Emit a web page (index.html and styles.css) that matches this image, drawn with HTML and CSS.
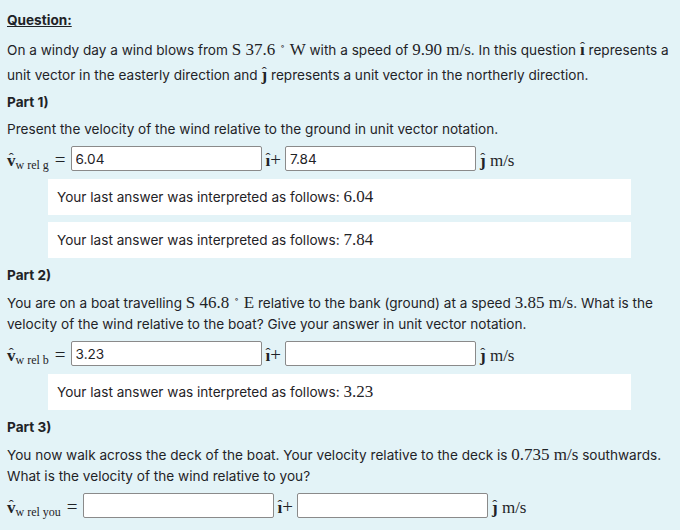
FILE: index.html
```html
<!DOCTYPE html>
<html lang="en">
<head>
  <meta charset="UTF-8" />
  <meta name="viewport" content="width=device-width, initial-scale=1.0" />
  <title>Question</title>
  <link rel="stylesheet" href="styles.css">
</head>
<body>
  <div class="question">
    <div class="q-title">Question:</div>
    <p class="q-text">On a windy day a wind blows from <span class="m">S 37.6<sup>&#8728;</sup>W</span> with a speed of <span class="m">9.90 m/s</span>. In this question <span class="vec"><span class="hat">&#710;</span>&#305;</span> represents a unit vector in the easterly direction and <span class="vec"><span class="hat">&#710;</span>&#567;</span> represents a unit vector in the northerly direction.</p>

    <div class="part-title">Part 1)</div>
    <p class="q-text">Present the velocity of the wind relative to the ground in unit vector notation.</p>
    <div class="answer-row">
      <span class="m"><span class="vec"><span class="hat">&#710;</span>v</span><sub>w rel g</sub><span class="op eq">=</span></span>
      <input class="ans-input" type="text" value="6.04">
      <span class="m"><span class="vec"><span class="hat">&#710;</span>&#305;</span><span class="op">+</span></span>
      <input class="ans-input" type="text" value="7.84">
      <span class="m"><span class="vec"><span class="hat">&#710;</span>&#567;</span> m/s</span>
    </div>
    <div class="feedback">Your last answer was interpreted as follows: <span class="m">6.04</span></div>
    <div class="feedback">Your last answer was interpreted as follows: <span class="m">7.84</span></div>

    <div class="part-title">Part 2)</div>
    <p class="q-text">You are on a boat travelling <span class="m">S 46.8<sup>&#8728;</sup>E</span> relative to the bank (ground) at a speed <span class="m">3.85 m/s</span>. What is the velocity of the wind relative to the boat? Give your answer in unit vector notation.</p>
    <div class="answer-row">
      <span class="m"><span class="vec"><span class="hat">&#710;</span>v</span><sub>w rel b</sub><span class="op eq">=</span></span>
      <input class="ans-input" type="text" value="3.23">
      <span class="m"><span class="vec"><span class="hat">&#710;</span>&#305;</span><span class="op">+</span></span>
      <input class="ans-input" type="text" value="">
      <span class="m"><span class="vec"><span class="hat">&#710;</span>&#567;</span> m/s</span>
    </div>
    <div class="feedback">Your last answer was interpreted as follows: <span class="m">3.23</span></div>

    <div class="part-title">Part 3)</div>
    <p class="q-text">You now walk across the deck of the boat. Your velocity relative to the deck is <span class="m">0.735 m/s</span> southwards. What is the velocity of the wind relative to you?</p>
    <div class="answer-row">
      <span class="m"><span class="vec"><span class="hat">&#710;</span>v</span><sub>w rel you</sub><span class="op eq">=</span></span>
      <input class="ans-input" type="text" value="">
      <span class="m"><span class="vec"><span class="hat">&#710;</span>&#305;</span><span class="op">+</span></span>
      <input class="ans-input" type="text" value="">
      <span class="m"><span class="vec"><span class="hat">&#710;</span>&#567;</span> m/s</span>
    </div>
  </div>
</body>
</html>
```

FILE: styles.css
```css
body {
  margin: 0;
  background: #e3f3f7;
  color: #1f2327;
  font-family: Inter, "Liberation Sans", sans-serif;
  font-size: 13.6px;
  line-height: 21px;
}
.question {
  padding: 10px 7px;
}
.q-title {
  font-weight: bold;
  text-decoration: underline;
  margin-bottom: 5px;
}
.part-title {
  font-weight: bold;
  margin-bottom: 6px;
}
.q-text {
  margin: 0 0 6px 0;
}
.m {
  font-family: "Liberation Serif", "DejaVu Serif", serif;
  font-size: 17px;
}
.m sup {
  font-size: 9px;
  line-height: 0;
  vertical-align: 6px;
  margin: 0 5px;
}
.m sub {
  font-size: 12px;
  line-height: 0;
  vertical-align: -3px;
  margin-right: 3px;
}
.op {
  font-size: 19px;
  line-height: 0;
}
.op.eq {
  margin: 0 1px 0 3px;
}
.vec {
  position: relative;
  display: inline-block;
  padding-top: 5px;
  line-height: 17px;
  font-family: "Liberation Serif", "DejaVu Serif", serif;
  font-weight: bold;
  font-size: 17px;
}
.hat {
  position: absolute;
  left: 0;
  right: 0;
  top: 4px;
  text-align: center;
  font-weight: normal;
  font-size: 15px;
  line-height: 15px;
}
.answer-row {
  display: flex;
  align-items: center;
  gap: 4px;
  height: 25px;
  margin-bottom: 8px;
}
.ans-input {
  width: 191px;
  height: 25px;
  box-sizing: border-box;
  border: 1px solid #8a8a8a;
  border-radius: 2px;
  padding: 0 4px;
  font-family: Inter, "Liberation Sans", sans-serif;
  font-size: 13.6px;
  color: #1f2327;
  background: #fff;
}
.feedback {
  background: #fff;
  margin: 0 0 7px 41px;
  width: 583px;
  height: 36px;
  box-sizing: border-box;
  padding: 7px 9px;
}
.feedback + .part-title {
  margin-top: 6px;
}
```
